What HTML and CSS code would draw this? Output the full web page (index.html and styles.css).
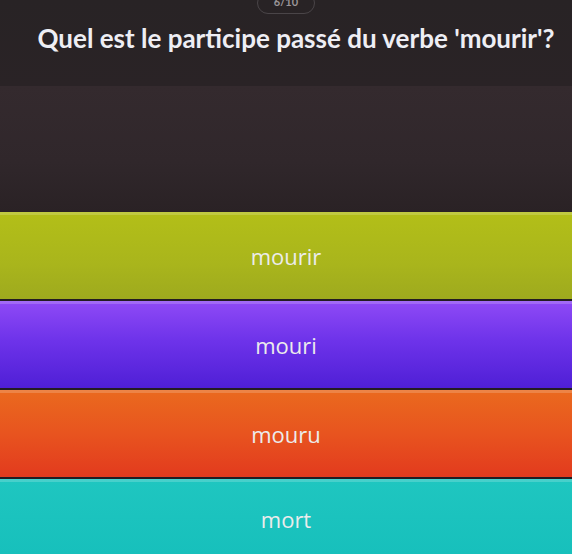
FILE: index.html
```html
<!DOCTYPE html>
<html lang="fr">
<head>
<meta charset="utf-8">
<title>Quiz</title>
<link rel="stylesheet" href="styles.css">
</head>
<body>
<div class="screen">
  <header class="top">
    <div class="counter">6/10</div>
    <h1 class="question">Quel est le participe passé du verbe 'mourir'?</h1>
  </header>
  <div class="spacer"></div>
  <div class="answers">
    <div class="answer lime">mourir</div>
    <div class="answer purple">mouri</div>
    <div class="answer orange">mouru</div>
    <div class="answer teal">mort</div>
  </div>
</div>
</body>
</html>
```
FILE: styles.css
```css
html, body {
  margin: 0;
  padding: 0;
  width: 572px;
  height: 554px;
  overflow: hidden;
  background: #2b2427;
}
.screen {
  display: flex;
  flex-direction: column;
  height: 554px;
  font-family: "Lato", "Open Sans", sans-serif;
}
.top {
  display: flex;
  flex-direction: column;
  align-items: center;
  height: 86px;
  background: linear-gradient(180deg, #282325 0%, #2a2326 100%);
}
.counter {
  margin-top: -8px;
  width: 58px;
  height: 22px;
  border: 1px solid #4a4548;
  border-radius: 12px;
  color: #9a9598;
  font-size: 11px;
  line-height: 12px;
  font-weight: 700;
  display: flex;
  align-items: flex-end;
  justify-content: center;
  padding-bottom: 5px;
  box-sizing: border-box;
}
.question {
  margin: 8px 0 0 20px;
  color: #eeeef4;
  font-size: 26px;
  line-height: 32px;
  font-weight: 700;
  letter-spacing: 0;
  white-space: nowrap;
}
.spacer {
  height: 126px;
  background: linear-gradient(180deg, #342a2e 0%, #30272b 60%, #2a2225 100%);
}
.answers {
  display: flex;
  flex-direction: column;
  gap: 2px;
  background: #231c22;
  flex: 1;
}
.answer {
  height: 87px;
  flex: none;
  display: flex;
  align-items: center;
  justify-content: center;
  color: #ececec;
  font-size: 22px;
  font-family: "Open Sans", "Lato", sans-serif;
  box-shadow: inset 0 3px 0 rgba(255,255,255,0.18);
}
.lime {
  background: linear-gradient(180deg, #b3bf18 0%, #a9b51c 60%, #9eaa1e 100%);
}
.purple {
  background: linear-gradient(180deg, #8f4af6 0%, #6e33ea 45%, #4f1fd6 100%);
}
.orange {
  background: linear-gradient(180deg, #ea6a1e 0%, #e8541f 50%, #e23a1e 100%);
}
.teal {
  background: linear-gradient(180deg, #1fc6c0 0%, #17c0bc 100%);
  flex: 1;
  padding-top: 4px;
}
```
